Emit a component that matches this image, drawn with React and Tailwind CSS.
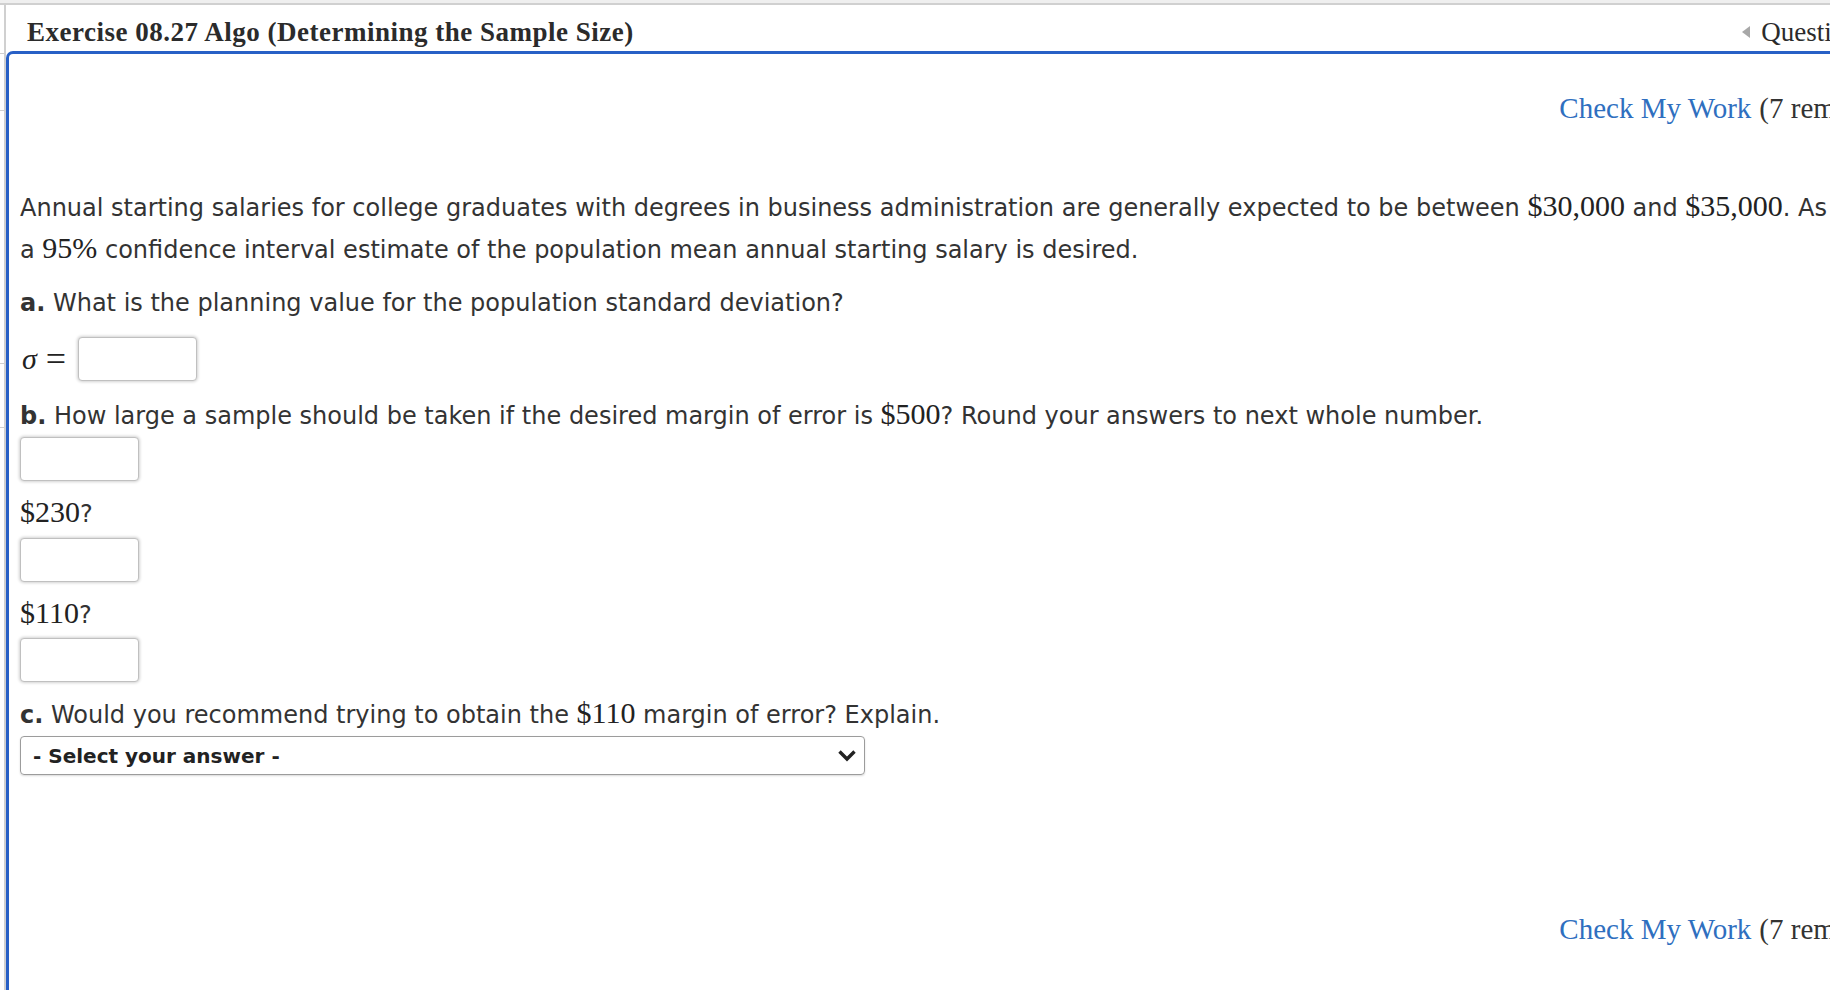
import React from 'react';

const M = ({ children }) => (
    <span className="font-['Liberation_Serif',serif] text-[30px] leading-none text-[#222]">{children}</span>
);

const AnswerBox = () => (
    <div className="w-[119px] h-[44px] rounded-[4px] border border-[#c0c0c0] bg-white shadow-[0_0_3px_1px_rgba(0,0,0,0.18)]"></div>
);

const CheckMyWork = () => (
    <div className="flex justify-end pr-[46px] whitespace-nowrap font-['Liberation_Serif',serif] text-[29px] leading-[36px]">
        <span className="text-[#2f6fbf]">Check My Work</span>
        <span className="ml-[8px] text-[#333]">(7 remaining)</span>
    </div>
);

const App = () => {
    return (
        <div className="w-[1830px] h-[990px] overflow-hidden bg-white relative font-['DejaVu_Sans',Verdana,sans-serif] text-[#333]">

            {/* top strip */}
            <div className="h-[5px] bg-[#efefef] border-b-2 border-[#d0d0d0]"></div>

            {/* ticks of the panel behind */}
            <div className="absolute left-0 top-[53px] w-[5px] h-[1px] bg-[#cfcfcf]"></div>
            <div className="absolute left-0 top-[110px] w-[5px] h-[1px] bg-[#cfcfcf]"></div>
            <div className="absolute left-0 top-[363px] w-[4px] h-[1px] bg-[#cfcfcf]"></div>
            <div className="absolute left-0 top-[427px] w-[4px] h-[1px] bg-[#cfcfcf]"></div>

            <div className="ml-[4px] w-[1960px] border-l-2 border-[#d0d0d0]">

                {/* Header */}
                <div className="h-[46px] flex items-center justify-between pl-[21px] pt-[8px]">
                    <h1 className="font-['Liberation_Serif',serif] font-bold text-[27px] leading-[32px] text-[#2b2b2b] tracking-[0.5px]">
                        Exercise 08.27 Algo (Determining the Sample Size)
                    </h1>
                    <div className="flex items-center gap-[10px] pr-[22px] font-['Liberation_Serif',serif] text-[27px] leading-[32px] text-[#2b2b2b]">
                        <svg width="9" height="12" viewBox="0 0 9 12">
                            <path d="M8 0 L0 6 L8 12 Z" fill="#a8a8a8" />
                        </svg>
                        <span>Question 5 of 10</span>
                    </div>
                </div>

                {/* Panel */}
                <div className="h-[960px] border-l-[3px] border-t-[3px] border-[#2860c6] rounded-tl-[7px] pl-[11px] pt-[36px]">

                    <CheckMyWork />

                    <p className="mt-[61px] w-[1812px] text-[24px] leading-[42px]">
                        Annual starting salaries for college graduates with degrees in business administration are generally expected to be between <M>$30,000</M> and <M>$35,000</M>. As a <M>95%</M> confidence interval estimate of the population mean annual starting salary is desired.
                    </p>

                    <p className="mt-[11px] text-[24px] leading-[42px]">
                        <b>a.</b> What is the planning value for the population standard deviation?
                    </p>

                    <div className="mt-[13px] flex items-center">
                        <span className="font-['Liberation_Serif',serif] italic text-[30px] leading-none text-[#222] ml-[2px]">σ</span>
                        <span className="font-['Liberation_Serif',serif] text-[36px] leading-none text-[#222] ml-[9px] mr-[12px]">=</span>
                        <AnswerBox />
                    </div>

                    <p className="mt-[14px] text-[24px] leading-[42px]">
                        <b>b.</b> How large a sample should be taken if the desired margin of error is <M>$500</M>? Round your answers to next whole number.
                    </p>
                    <AnswerBox />

                    <p className="mt-[12px] mb-[3px] text-[24px] leading-[42px]">
                        <M>$230</M>?
                    </p>
                    <AnswerBox />

                    <p className="mt-[12px] mb-[2px] text-[24px] leading-[42px]">
                        <M>$110</M>?
                    </p>
                    <AnswerBox />

                    <p className="mt-[12px] text-[24px] leading-[42px]">
                        <b>c.</b> Would you recommend trying to obtain the <M>$110</M> margin of error? Explain.
                    </p>

                    <div className="w-[845px] h-[39px] flex items-center justify-between pl-[12px] pr-[7px] rounded-[4px] border border-[#9c9c9c] shadow-[0_1px_2px_rgba(0,0,0,0.15)]">
                        <span className="text-[20px] font-bold text-[#222]">- Select your answer -</span>
                        <svg width="20" height="13" viewBox="0 0 20 13">
                            <path d="M2.5 2.5 L10 10 L17.5 2.5" fill="none" stroke="#222" strokeWidth="3.4" />
                        </svg>
                    </div>

                    <div className="mt-[136px]">
                        <CheckMyWork />
                    </div>
                </div>
            </div>
        </div>
    );
};

export default App;
